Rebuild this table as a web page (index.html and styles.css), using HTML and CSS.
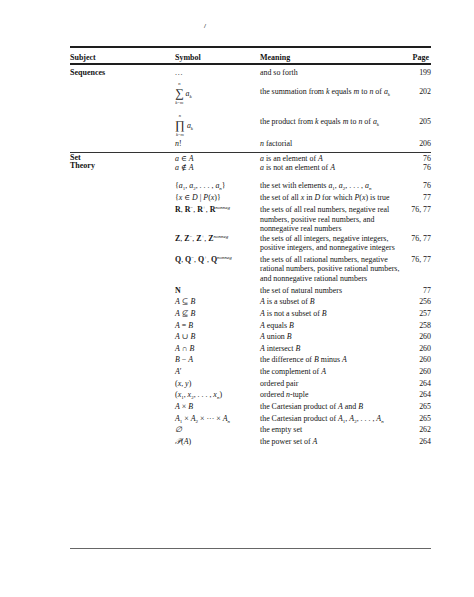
FILE: index.html
```html
<!DOCTYPE html>
<html>
<head>
<meta charset="utf-8">
<link rel="stylesheet" href="styles.css">
</head>
<body>
<div class="page">
  <div class="mark">/</div>
  <table class="notation">
    <colgroup>
      <col class="c-subj"><col class="c-sym"><col class="c-mean"><col class="c-page">
    </colgroup>
    <thead>
      <tr>
        <th class="subj">Subject</th>
        <th class="sym">Symbol</th>
        <th class="mean">Meaning</th>
        <th class="pg">Page</th>
      </tr>
    </thead>
    <tbody>
      <tr class="r-dots">
        <td class="subj" rowspan="4">Sequences</td>
        <td class="sym"><span class="dots">...</span></td>
        <td class="mean">and so forth</td>
        <td class="pg">199</td>
      </tr>
      <tr class="r-sum">
        <td class="sym">
          <span class="op">
            <span class="stack"><span class="lim"><i>n</i></span><span class="big">&#8721;</span><span class="lim"><i>k</i>=<i>m</i></span></span>
            <span class="term"><i>a</i><sub><i>k</i></sub></span>
          </span>
        </td>
        <td class="mean mid">the summation from <i>k</i> equals <i>m</i> to <i>n</i> of <i>a</i><sub><i>k</i></sub></td>
        <td class="pg mid">202</td>
      </tr>
      <tr class="r-prod">
        <td class="sym">
          <span class="op">
            <span class="stack"><span class="lim"><i>n</i></span><span class="big">&#8719;</span><span class="lim"><i>k</i>=<i>m</i></span></span>
            <span class="term"><i>a</i><sub><i>k</i></sub></span>
          </span>
        </td>
        <td class="mean mid">the product from <i>k</i> equals <i>m</i> to <i>n</i> of <i>a</i><sub><i>k</i></sub></td>
        <td class="pg mid">205</td>
      </tr>
      <tr class="r-fact">
        <td class="sym"><i>n</i>!</td>
        <td class="mean"><i>n</i> factorial</td>
        <td class="pg">206</td>
      </tr>

      <tr class="r-set1 sep">
        <td class="subj set-subj" rowspan="21">Set<br>Theory</td>
        <td class="sym"><i>a</i> &#8712; <i>A</i></td>
        <td class="mean"><i>a</i> is an element of <i>A</i></td>
        <td class="pg">76</td>
      </tr>
      <tr class="r-set2">
        <td class="sym"><i>a</i> &#8713; <i>A</i></td>
        <td class="mean"><i>a</i> is not an element of <i>A</i></td>
        <td class="pg">76</td>
      </tr>
      <tr class="r-set3">
        <td class="sym">{<i>a</i><sub>1</sub>, <i>a</i><sub>2</sub>, . . . , <i>a</i><sub><i>n</i></sub>}</td>
        <td class="mean">the set with elements <i>a</i><sub>1</sub>, <i>a</i><sub>2</sub>, . . . , <i>a</i><sub><i>n</i></sub></td>
        <td class="pg">76</td>
      </tr>
      <tr class="r-set4">
        <td class="sym">{<i>x</i> &#8712; <i>D</i> | <i>P</i>(<i>x</i>)}</td>
        <td class="mean">the set of all <i>x</i> in <i>D</i> for which <i>P</i>(<i>x</i>) is true</td>
        <td class="pg">77</td>
      </tr>
      <tr class="r-real">
        <td class="sym"><b>R</b>, <b>R</b><sup>&#8722;</sup>, <b>R</b><sup>+</sup>, <b>R</b><sup><i>nonneg</i></sup></td>
        <td class="mean">the sets of all real numbers, negative real<br>numbers, positive real numbers, and<br>nonnegative real numbers</td>
        <td class="pg">76, 77</td>
      </tr>
      <tr class="r-int">
        <td class="sym"><b>Z</b>, <b>Z</b><sup>&#8722;</sup>, <b>Z</b><sup>+</sup>, <b>Z</b><sup><i>nonneg</i></sup></td>
        <td class="mean">the sets of all integers, negative integers,<br>positive integers, and nonnegative integers</td>
        <td class="pg">76, 77</td>
      </tr>
      <tr class="r-rat">
        <td class="sym"><b>Q</b>, <b>Q</b><sup>&#8722;</sup>, <b>Q</b><sup>+</sup>, <b>Q</b><sup><i>nonneg</i></sup></td>
        <td class="mean">the sets of all rational numbers, negative<br>rational numbers, positive rational numbers,<br>and nonnegative rational numbers</td>
        <td class="pg">76, 77</td>
      </tr>
      <tr class="r-nat">
        <td class="sym"><b>N</b></td>
        <td class="mean">the set of natural numbers</td>
        <td class="pg">77</td>
      </tr>
      <tr class="r-std">
        <td class="sym"><i>A</i> &#8838; <i>B</i></td>
        <td class="mean"><i>A</i> is a subset of <i>B</i></td>
        <td class="pg">256</td>
      </tr>
      <tr class="r-std">
        <td class="sym"><i>A</i> &#8840; <i>B</i></td>
        <td class="mean"><i>A</i> is not a subset of <i>B</i></td>
        <td class="pg">257</td>
      </tr>
      <tr class="r-std">
        <td class="sym"><i>A</i> = <i>B</i></td>
        <td class="mean"><i>A</i> equals <i>B</i></td>
        <td class="pg">258</td>
      </tr>
      <tr class="r-std">
        <td class="sym"><i>A</i> &#8746; <i>B</i></td>
        <td class="mean"><i>A</i> union <i>B</i></td>
        <td class="pg">260</td>
      </tr>
      <tr class="r-std">
        <td class="sym"><i>A</i> &#8745; <i>B</i></td>
        <td class="mean"><i>A</i> intersect <i>B</i></td>
        <td class="pg">260</td>
      </tr>
      <tr class="r-std">
        <td class="sym"><i>B</i> &#8722; <i>A</i></td>
        <td class="mean">the difference of <i>B</i> minus <i>A</i></td>
        <td class="pg">260</td>
      </tr>
      <tr class="r-std">
        <td class="sym"><i>A</i>&#8242;</td>
        <td class="mean">the complement of <i>A</i></td>
        <td class="pg">260</td>
      </tr>
      <tr class="r-std">
        <td class="sym">(<i>x</i>, <i>y</i>)</td>
        <td class="mean">ordered pair</td>
        <td class="pg">264</td>
      </tr>
      <tr class="r-std">
        <td class="sym">(<i>x</i><sub>1</sub>, <i>x</i><sub>2</sub>, . . . , <i>x</i><sub><i>n</i></sub>)</td>
        <td class="mean">ordered <i>n</i>-tuple</td>
        <td class="pg">264</td>
      </tr>
      <tr class="r-std">
        <td class="sym"><i>A</i> &#215; <i>B</i></td>
        <td class="mean">the Cartesian product of <i>A</i> and <i>B</i></td>
        <td class="pg">265</td>
      </tr>
      <tr class="r-std">
        <td class="sym"><i>A</i><sub>1</sub> &#215; <i>A</i><sub>2</sub> &#215; &#183;&#183;&#183; &#215; <i>A</i><sub><i>n</i></sub></td>
        <td class="mean">the Cartesian product of <i>A</i><sub>1</sub>, <i>A</i><sub>2</sub>, . . . , <i>A</i><sub><i>n</i></sub></td>
        <td class="pg">265</td>
      </tr>
      <tr class="r-std">
        <td class="sym"><i>&#8709;</i></td>
        <td class="mean">the empty set</td>
        <td class="pg">262</td>
      </tr>
      <tr class="r-std">
        <td class="sym"><span class="script">&#119979;</span>(<i>A</i>)</td>
        <td class="mean">the power set of <i>A</i></td>
        <td class="pg">264</td>
      </tr>
    </tbody>
  </table>
  <div class="foot-rule"></div>
</div>
</body>
</html>
```

FILE: styles.css
```css
html, body {
  margin: 0;
  padding: 0;
  background: #ffffff;
}

body {
  color: #141414;
  font-family: "Liberation Serif", "Times New Roman", "DejaVu Serif", serif;
}

.page {
  width: 474px;
  height: 597px;
  box-sizing: border-box;
  padding: 23px 0 0 70px;
  overflow: hidden;
}

.mark {
  height: 23.3px;
  box-sizing: border-box;
  padding-left: 134px;
  font-size: 7px;
  line-height: 7px;
  font-weight: bold;
  color: #222;
}

.notation {
  width: 361px;
  table-layout: fixed;
  border-collapse: separate;
  border-spacing: 0;
  font-size: 7.9px;
}

.c-subj { width: 105px; }
.c-sym { width: 85px; }
.c-mean { width: 141px; }
.c-page { width: 30px; }

.notation th,
.notation td {
  padding: 0;
  line-height: 9.5px;
  vertical-align: top;
  text-align: left;
  white-space: nowrap;
}

.notation th {
  font-weight: bold;
  font-size: 8px;
  border-top: 2px solid #1e1e1e;
  border-bottom: 2px solid #1e1e1e;
  padding-top: 4.25px;
  padding-bottom: 0.95px;
}

.notation th.pg {
  text-align: right;
  padding-right: 2px;
}

.notation td.pg {
  text-align: right;
}

.notation td.subj {
  font-weight: bold;
  font-size: 8px;
}

.notation td.set-subj {
  line-height: 8.6px;
}

.notation td.mid {
  vertical-align: middle;
}

.notation i {
  font-style: italic;
}

.notation sub,
.notation sup {
  font-size: 5px;
  line-height: 0;
}

.notation sub {
  vertical-align: -1.6px;
}

.notation sup {
  vertical-align: 3.2px;
}

.dots {
  letter-spacing: 0.8px;
}

.op {
  display: inline-flex;
  align-items: center;
}

.stack {
  display: inline-flex;
  flex-direction: column;
  align-items: center;
}

.lim {
  font-size: 4.6px;
  line-height: 5.3px;
}

.big {
  font-size: 12px;
  line-height: 13.8px;
}

.term {
  margin-left: 2px;
  margin-top: 1px;
}

.script {
  font-family: "DejaVu Serif", "Noto Sans", serif;
  font-style: italic;
}

/* vertical rhythm of rows */
.r-dots > td { padding-top: 3.25px; }
.r-sum > td.sym { padding-top: 0.5px; }
.r-prod > td.sym { padding-top: 4.6px; }
.r-fact > td { padding-top: 1.2px; padding-bottom: 3.25px; }
.sep > td { border-top: 1px solid #333333; }
.r-set1 > td { padding-top: 1.25px; }
.r-set2 > td { padding-top: 0; }
.r-set3 > td { padding-top: 8px; }
.r-set4 > td { padding-top: 3px; }
.r-real > td { padding-top: 2.4px; }
.r-int > td { padding-top: 0; }
.r-rat > td { padding-top: 1.9px; }
.r-nat > td { padding-top: 2.5px; }
.r-std > td { padding-top: 2.15px; }

.foot-rule {
  width: 361px;
  margin-top: 102px;
  border-top: 1px solid #666666;
}
```
